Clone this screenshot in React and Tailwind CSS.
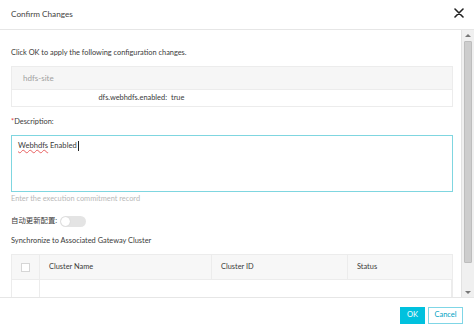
import React from 'react';

const FONT = { fontFamily: 'Lato, "Noto Sans CJK SC", sans-serif' };

function Scrollbar() {
  return (
    <div className="w-[13px] flex flex-col bg-[#f0f0f0] border-l border-[#e2e2e2]">
      <div className="h-[10px] flex items-center justify-center">
        <div className="w-0 h-0 border-l-[3px] border-r-[3px] border-b-[3px] border-l-transparent border-r-transparent border-b-[#777]" />
      </div>
      <div className="flex-1 flex flex-col py-[1px]">
        <div className="h-[222px] mx-[2px] rounded-[1px] bg-[#cdcdcd] border border-[#bdbdbd]" />
        <div className="flex-1" />
      </div>
      <div className="h-[10px] flex items-center justify-center">
        <div className="w-0 h-0 border-l-[3px] border-r-[3px] border-t-[3px] border-l-transparent border-r-transparent border-t-[#777]" />
      </div>
    </div>
  );
}

export default function App() {
  return (
    <div className="w-[474px] h-[332px] bg-white flex flex-col text-[#3a3a3a] overflow-hidden" style={FONT}>
      {/* Header */}
      <div className="h-[30px] shrink-0 flex items-center justify-between pl-[11px] pr-[10px] border-b border-[#e6e6e6]">
        <span className="text-[8.2px] text-[#444]">Confirm Changes</span>
        <svg width="10" height="10" viewBox="0 0 10 10" className="mb-[3px]">
          <path d="M1 1 L9 9 M9 1 L1 9" stroke="#222" strokeWidth="1.6" strokeLinecap="round" />
        </svg>
      </div>

      {/* Body */}
      <div className="flex-1 flex min-h-0">
        <div className="flex-1 pl-[11px] pr-[8px] pt-[16px] overflow-hidden text-[7.4px]">
          <div className="h-[14px] leading-[14px]">Click OK to apply the following configuration changes.</div>

          <div className="mt-[6px] border border-[#ececec]">
            <div className="h-[23px] bg-[#f6f6f6] border-b border-[#ececec] flex items-center pl-[11px] text-[#a0a0a0] text-[8px]">
              hdfs-site
            </div>
            <div className="h-[16px] flex items-center">
              <span className="w-[155px] text-right">dfs.webhdfs.enabled:</span>
              <span className="ml-[4px]">true</span>
            </div>
          </div>

          <div className="mt-[8px] h-[14px] leading-[14px]">
            <span className="text-[#e4393c]">*</span>Description:
          </div>

          <div className="mt-[6px] h-[57px] border border-[#7fd6e0] px-[6px] pt-[4px] text-[7.6px]">
            <span className="underline decoration-wavy decoration-[#e86060] decoration-[0.5px] underline-offset-[1px]">Webhdfs</span>
            <span> Enabled</span>
            <span className="inline-block w-[1px] h-[10px] bg-[#222] align-middle ml-[1px]" />
          </div>

          <div className="h-[14px] leading-[14px] text-[#b8b8b8]">Enter the execution commitment record</div>

          <div className="mt-[8px] h-[14px] flex items-center">
            <span>自动更新配置:</span>
            <div className="ml-[3px] w-[26px] h-[11px] rounded-full bg-[#e4e4e4] flex items-center pl-[1px]">
              <div className="w-[9px] h-[9px] rounded-full bg-white shadow-[0_0_1px_rgba(0,0,0,0.2)]" />
            </div>
          </div>

          <div className="mt-[6px] h-[14px] leading-[14px]">Synchronize to Associated Gateway Cluster</div>

          <div className="mt-[6px] border border-[#ececec]">
            <div className="h-[25px] bg-[#f7f7f7] border-b border-[#ececec] flex">
              <div className="w-[28px] border-r border-[#ececec] flex items-center justify-center">
                <div className="w-[9px] h-[9px] border border-[#d6d6d6] bg-white" />
              </div>
              <div className="w-[172px] border-r border-[#ececec] flex items-center pl-[9px]">Cluster Name</div>
              <div className="w-[136px] border-r border-[#ececec] flex items-center pl-[9px]">Cluster ID</div>
              <div className="flex-1 flex items-center pl-[9px]">Status</div>
            </div>
            <div className="h-[18px] flex">
              <div className="w-[28px] border-r border-[#ececec]" />
              <div className="w-[172px]" />
              <div className="w-[136px]" />
              <div className="flex-1 border-r border-[#ececec]" />
            </div>
          </div>
        </div>
        <Scrollbar />
      </div>

      {/* Footer */}
      <div className="h-[35px] shrink-0 border-t border-[#e6e6e6] flex items-center justify-end gap-[3px] pr-[11px] text-[7.5px]">
        <button type="button" className="h-[17px] w-[25px] bg-[#00c1de] text-white">OK</button>
        <button type="button" className="h-[17px] w-[35px] border border-[#7fd6e6] text-[#00a3c4] bg-white">Cancel</button>
      </div>
    </div>
  );
}
